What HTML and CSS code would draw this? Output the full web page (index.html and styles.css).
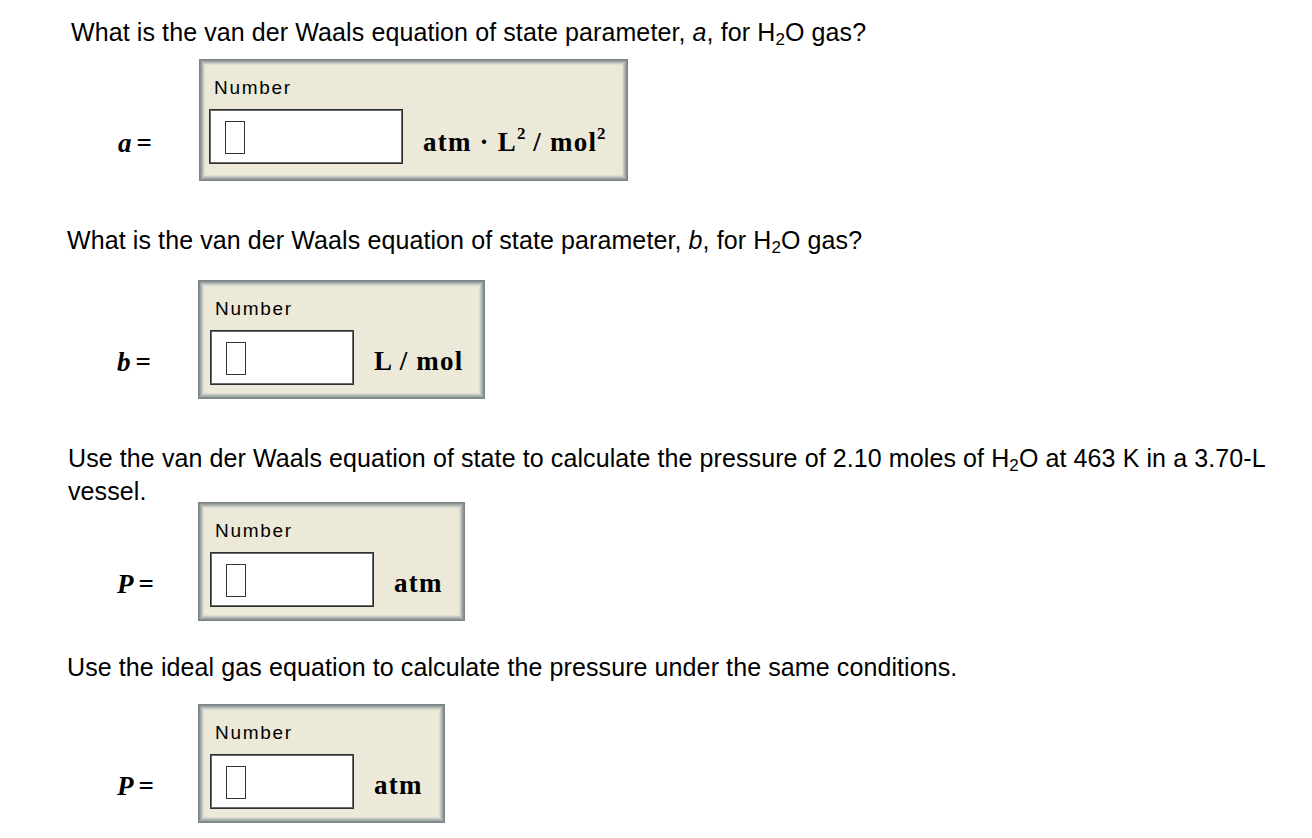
FILE: index.html
```html
<!DOCTYPE html>
<html>
<head>
<meta charset="utf-8">
<link rel="stylesheet" href="styles.css">
</head>
<body>
<div class="page">
  <section class="q q1">
    <p class="prompt">What is the van der Waals equation of state parameter, <i>a</i>, for H<sub>2</sub>O gas?</p>
    <div class="row">
      <div class="var"><i>a</i>=</div>
      <div class="box">
        <div class="box-title">Number</div>
        <div class="box-body">
          <div class="field field-a"><span class="caret"></span></div>
          <div class="unit">atm · L<sup>2</sup> / mol<sup>2</sup></div>
        </div>
      </div>
    </div>
  </section>

  <section class="q q2">
    <p class="prompt">What is the van der Waals equation of state parameter, <i>b</i>, for H<sub>2</sub>O gas?</p>
    <div class="row">
      <div class="var"><i>b</i>=</div>
      <div class="box">
        <div class="box-title">Number</div>
        <div class="box-body">
          <div class="field field-b"><span class="caret"></span></div>
          <div class="unit">L / mol</div>
        </div>
      </div>
    </div>
  </section>

  <section class="q q3">
    <p class="prompt">Use the van der Waals equation of state to calculate the pressure of 2.10 moles of H<sub>2</sub>O at 463 K in a 3.70-L vessel.</p>
    <div class="row">
      <div class="var"><i>P</i>=</div>
      <div class="box">
        <div class="box-title">Number</div>
        <div class="box-body">
          <div class="field field-c"><span class="caret"></span></div>
          <div class="unit">atm</div>
        </div>
      </div>
    </div>
  </section>

  <section class="q q4">
    <p class="prompt">Use the ideal gas equation to calculate the pressure under the same conditions.</p>
    <div class="row">
      <div class="var"><i>P</i>=</div>
      <div class="box">
        <div class="box-title">Number</div>
        <div class="box-body">
          <div class="field field-b"><span class="caret"></span></div>
          <div class="unit">atm</div>
        </div>
      </div>
    </div>
  </section>
</div>
</body>
</html>
```

FILE: styles.css
```css
html, body {
  margin: 0;
  padding: 0;
  background: #ffffff;
}

.page {
  padding: 16px 0 0 67px;
  width: 1200px;
  font-family: "Liberation Sans", Arial, sans-serif;
  color: #000;
}

.prompt {
  margin: 0;
  font-size: 25px;
  line-height: 33px;
  letter-spacing: 0.1px;
}

.prompt sub {
  font-size: 17px;
  line-height: 0;
  vertical-align: -4px;
}

.q1 .prompt { padding-left: 4px; }
.q3 .prompt { padding-left: 1px; }

.row {
  display: flex;
  align-items: flex-start;
}

.q1 .row { margin-top: 10px; }
.q2 { margin-top: 43px; }
.q2 .row { margin-top: 23px; }
.q3 { margin-top: 43px; }
.q3 .row { margin-top: -6px; }
.q4 { margin-top: 30px; }
.q4 .row { margin-top: 20px; }

.var {
  width: 81px;
  margin-left: 50px;
  margin-top: 69px;
  font-family: "Liberation Serif", "Times New Roman", serif;
  font-weight: bold;
  font-size: 27px;
  line-height: 27px;
  letter-spacing: 5px;
}

.q1 .var { margin-left: 51px; margin-top: 71px; }

.box {
  background: #ece9d8;
  border: 1px solid #7a8483;
  box-shadow:
    inset 0 0 0 1px #889190,
    inset 0 0 0 2px #9ca4a2,
    inset 0 0 0 3px #b2b8b4,
    inset 0 0 0 4px #c8ccc4,
    inset 0 0 0 5px #dcdcd0;
  padding: 16px 21px 13px 11px;
}

.box-title {
  font-family: "Liberation Sans", Arial, sans-serif;
  font-size: 19px;
  line-height: 24px;
  letter-spacing: 1.7px;
  padding-left: 5px;
}

.box-body {
  display: flex;
  align-items: center;
  margin-top: 9px;
}

.field {
  box-sizing: border-box;
  height: 55px;
  background: #fff;
  border: 1px solid #2e2e2e;
  box-shadow: inset 1px 1px 0 #6a6a6a, inset -1px -1px 0 #6a6a6a;
  padding: 11px 0 0 15px;
}

.field-a { width: 194px; }
.field-b { width: 144px; }
.field-c { width: 164px; }

.q1 .box { padding-left: 9px; padding-bottom: 16px; }

.caret {
  display: block;
  box-sizing: border-box;
  width: 20px;
  height: 33px;
  border: 1px solid #333;
  background: #fff;
}

.unit {
  margin-left: 20px;
  margin-top: 8px;
  font-family: "Liberation Serif", "Times New Roman", serif;
  font-weight: bold;
  font-size: 27px;
  line-height: 27px;
  letter-spacing: 1.2px;
  white-space: nowrap;
}

.q1 .unit { margin-top: 12px; }

.unit sup {
  font-size: 17px;
  line-height: 0;
  vertical-align: 12px;
  letter-spacing: 0;
}
```
